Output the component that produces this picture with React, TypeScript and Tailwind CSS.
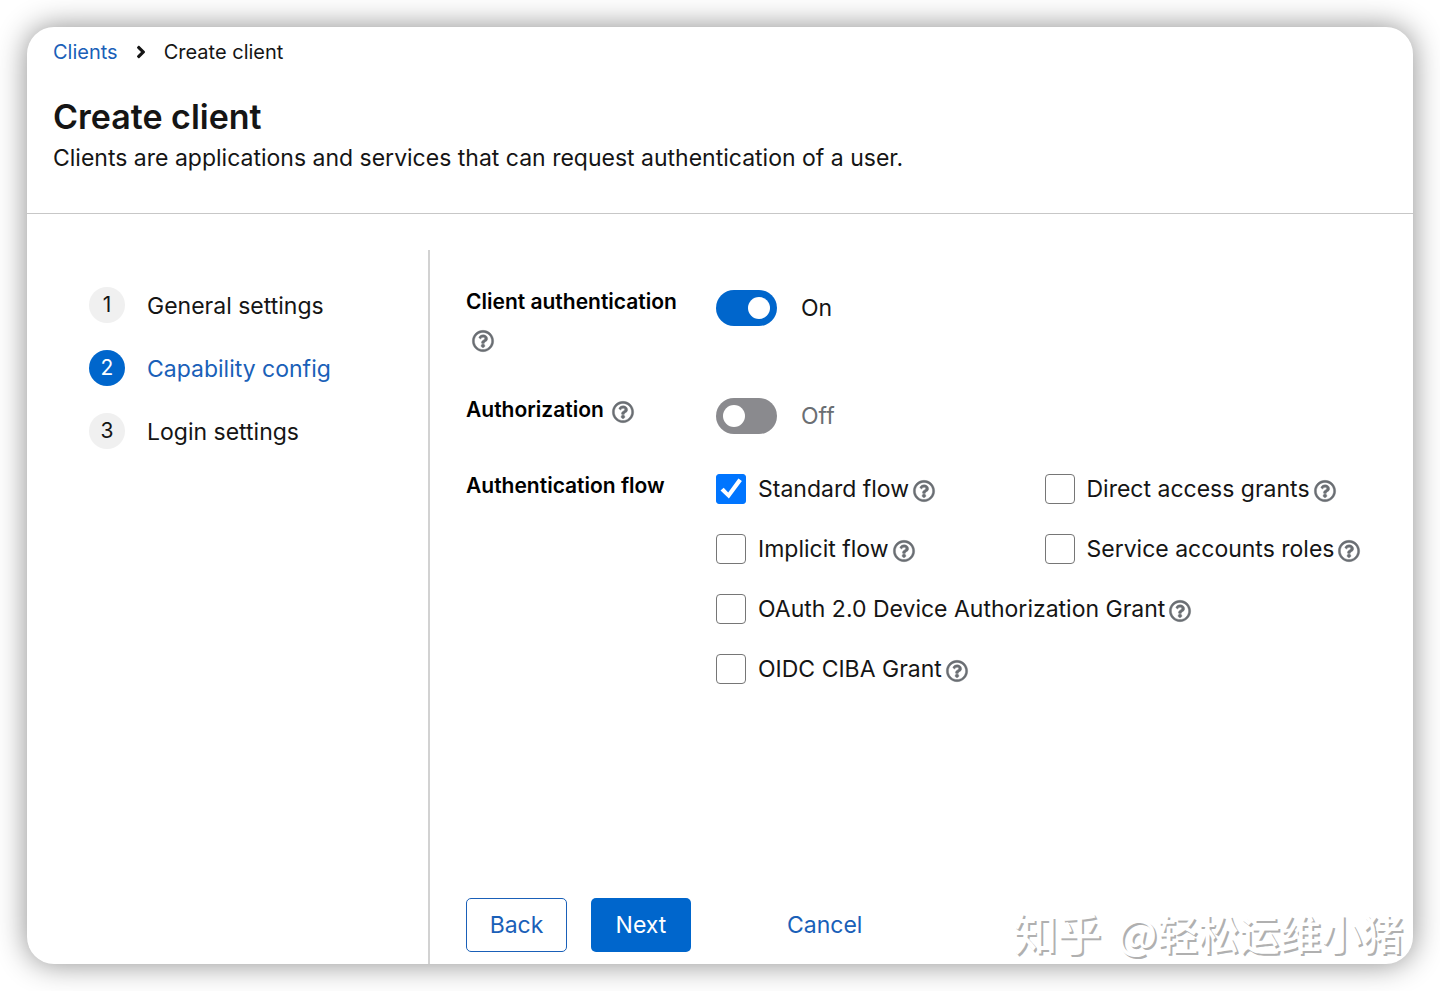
import { useState, type ReactNode } from "react";
import { FaAngleRight, FaRegQuestionCircle } from "react-icons/fa";

function Help({ topic, className = "" }: { topic: string; className?: string }) {
  return (
    <button type="button" aria-label={`More info for ${topic}`} className={`shrink-0 text-[#6a6e73] ${className}`}>
      <FaRegQuestionCircle className="size-[22px] overflow-visible stroke-current [stroke-width:10]" />
    </button>
  );
}

const steps = ["General settings", "Capability config", "Login settings"];

function Steps() {
  const current = 1;
  return (
    <nav aria-label="Wizard steps" className="w-[403px] shrink-0 border-r-2 border-[#d2d2d2] pt-[37px] pl-[62px]">
      <ol className="flex flex-col gap-[27px]">
        {steps.map((step, i) => (
          <li key={step}>
            <button
              type="button"
              aria-current={i === current ? "step" : undefined}
              className={`flex h-9 items-center gap-[22px] text-[23px] ${i === current ? "text-[#1a60b8]" : ""}`}
            >
              <span
                className={`flex size-9 items-center justify-center rounded-full text-[21px] ${
                  i === current ? "bg-[#0066cc] text-white" : "bg-[#f0f0f0]"
                }`}
              >
                {i + 1}
              </span>
              <span className="pt-0.5">{step}</span>
            </button>
          </li>
        ))}
      </ol>
    </nav>
  );
}

function Row({ label, children }: { label: ReactNode; children: ReactNode }) {
  return (
    <div className="flex">
      <div className="w-[250px] shrink-0 text-[21px] leading-8 font-semibold text-black">{label}</div>
      <div className="min-w-0 flex-1 pt-1">{children}</div>
    </div>
  );
}

function Toggle({ id, initial }: { id: string; initial: boolean }) {
  const [on, setOn] = useState(initial);
  return (
    <div className="flex h-9 items-center gap-6">
      <input
        id={id}
        type="checkbox"
        role="switch"
        checked={on}
        onChange={() => setOn(!on)}
        className="flex h-9 w-[61px] appearance-none items-center rounded-full bg-[#8a8a8e] px-[7px] before:size-[22px] before:rounded-full before:bg-white checked:justify-end checked:bg-[#0066cc]"
      />
      <label htmlFor={id} className={`text-[23px] ${on ? "" : "text-[#6a6e73]"}`}>
        {on ? "On" : "Off"}
      </label>
    </div>
  );
}

function Flow({ id, label, checked = false, wide = false }: { id: string; label: string; checked?: boolean; wide?: boolean }) {
  return (
    <div className={`flex h-[30px] items-center whitespace-nowrap ${wide ? "col-span-2" : ""}`}>
      <span className="grid shrink-0">
        <input
          id={id}
          type="checkbox"
          defaultChecked={checked}
          className="peer col-start-1 row-start-1 size-[30px] appearance-none rounded-[4px] border border-[#767676] bg-white checked:rounded-[3px] checked:border-[#0075ff] checked:bg-[#0075ff]"
        />
        <svg
          viewBox="0 0 30 30"
          aria-hidden="true"
          className="pointer-events-none invisible col-start-1 row-start-1 size-[30px] fill-white peer-checked:visible"
        >
          <path d="M4.5 16.6 7.7 13.8 12.2 18.4 22.4 4.4 25.9 7 12.9 24.4Z" />
        </svg>
      </span>
      <label htmlFor={id} className="pl-3 text-[23px]">
        {label}
      </label>
      <Help topic={label} className="pt-1 pl-1" />
    </div>
  );
}

export default function App() {
  return (
    <div className="flex min-h-screen flex-col bg-white p-[27px] font-['Inter','Noto_Sans_CJK_SC',sans-serif] text-[#151515]">
      <main className="relative flex flex-1 flex-col overflow-clip rounded-[27px] bg-white shadow-[0_0_30px_rgba(0,0,0,0.46)]">
        <header className="border-b border-[#c7c7c7] px-[26px] pt-[9px] pb-[37px]">
          <nav aria-label="Breadcrumb" className="flex h-8 items-center text-[20px]">
            <a href="#clients" className="text-[#1a60b8]">
              Clients
            </a>
            <FaAngleRight className="mx-[13px] size-5" />
            <span aria-current="page">Create client</span>
          </nav>
          <h1 className="mt-[26px] text-[34px] leading-[46px] font-semibold">Create client</h1>
          <p className="text-[23px] leading-9">
            Clients are applications and services that can request authentication of a user.
          </p>
        </header>
        <div className="flex flex-1 pt-9">
          <Steps />
          <form className="flex min-w-0 flex-1 flex-col px-9 pb-3" onSubmit={(e) => e.preventDefault()}>
            <div className="flex flex-1 flex-col gap-9 pt-9">
              <Row
                label={
                  <>
                    <label htmlFor="client-auth">Client authentication</label>
                    <Help topic="Client authentication" className="block h-10 pt-[6px] pl-[6px]" />
                  </>
                }
              >
                <Toggle id="client-auth" initial />
              </Row>
              <Row
                label={
                  <span className="flex items-center gap-2">
                    <label htmlFor="authorization">Authorization</label>
                    <Help topic="Authorization" className="pt-1" />
                  </span>
                }
              >
                <Toggle id="authorization" initial={false} />
              </Row>
              <Row label={<span>Authentication flow</span>}>
                <div className="grid grid-cols-2 gap-y-[30px] pr-1">
                  <Flow id="standard" label="Standard flow" checked />
                  <Flow id="direct" label="Direct access grants" />
                  <Flow id="implicit" label="Implicit flow" />
                  <Flow id="service" label="Service accounts roles" />
                  <Flow id="device" label="OAuth 2.0 Device Authorization Grant" wide />
                  <Flow id="ciba" label="OIDC CIBA Grant" wide />
                </div>
              </Row>
            </div>
            <footer className="flex h-[54px] text-[23px]">
              <button type="button" className="w-[101px] rounded-[5px] border border-[#1a60b8] text-[#1a60b8]">
                Back
              </button>
              <button type="submit" className="ml-6 w-[100px] rounded-[5px] bg-[#0066cc] text-white">
                Next
              </button>
              <button type="button" className="ml-[72px] px-6 text-[#1a60b8]">
                Cancel
              </button>
            </footer>
          </form>
        </div>
        <p className="absolute right-[10px] bottom-0.5 flex items-center gap-4 font-['Noto_Sans_CJK_SC',sans-serif] text-[41px] leading-[60px] font-medium text-white [text-shadow:2px_2px_0_#b0b0b0]">
          <span className="text-[44px]">知乎</span>
          <span>@轻松运维小猪</span>
        </p>
      </main>
    </div>
  );
}
